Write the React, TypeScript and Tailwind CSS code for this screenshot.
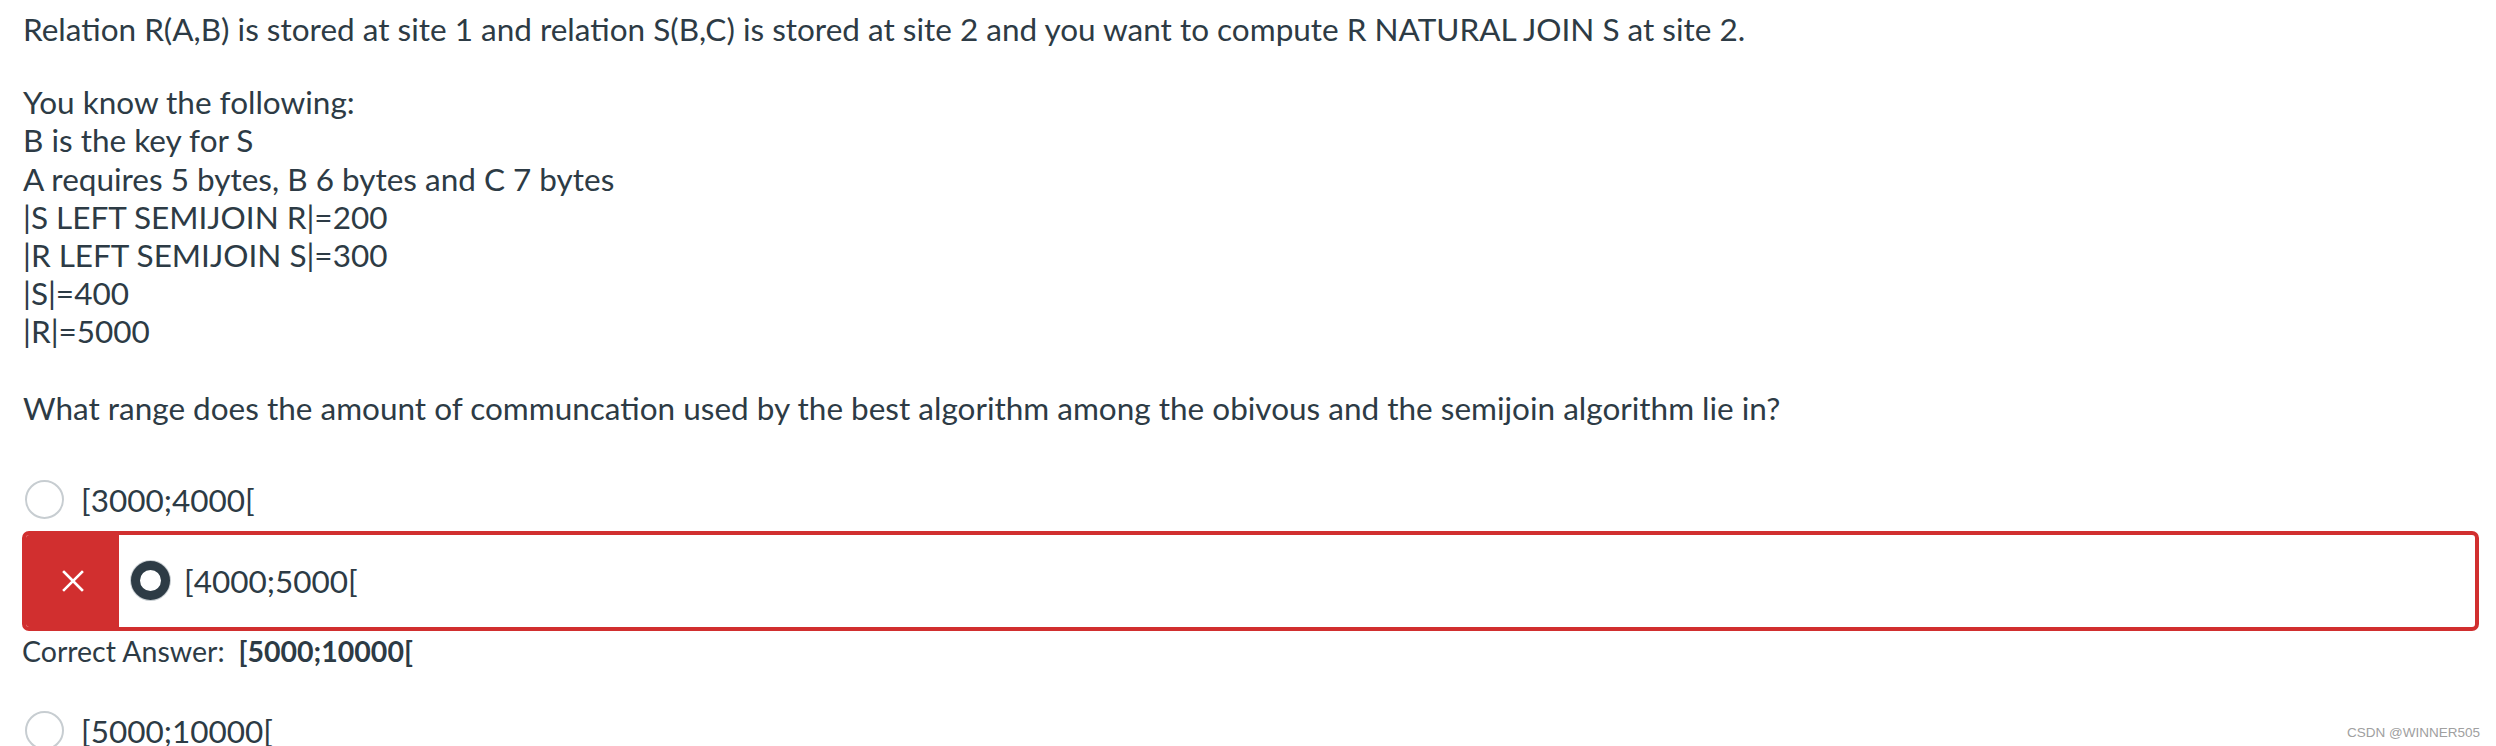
export default function App() {
  const textCls = "text-[#2d3b45]";
  return (
    <div
      className={`relative w-[2496px] h-[746px] overflow-hidden bg-white ${textCls}`}
      style={{ fontFamily: "Lato, 'Open Sans', sans-serif" }}
    >
      <div className="pl-[23px] pt-[10px] text-[31.5px] leading-[38.2px]">
        <p>
          Relation R(A,B) is stored at site 1 and relation S(B,C) is stored at site 2 and you want to compute R NATURAL JOIN S at site 2.
        </p>
        <div className="mt-[35px]">
          <p>You know the following:</p>
          <p>B is the key for S</p>
          <p>A requires 5 bytes, B 6 bytes and C 7 bytes</p>
          <p>|S LEFT SEMIJOIN R|=200</p>
          <p>|R LEFT SEMIJOIN S|=300</p>
          <p>|S|=400</p>
          <p>|R|=5000</p>
        </div>
        <p className="mt-[38px]">
          What range does the amount of communcation used by the best algorithm among the obivous and the semijoin algorithm lie in?
        </p>
      </div>

      <div className="pl-[22px] pr-[17px] text-[31.5px] leading-[38.2px]">
        {/* option 1 */}
        <div className="mt-[49px] flex items-center h-[48px]">
          <div className="w-[39px] h-[39px] rounded-full border-2 border-[#c7cdd1] bg-white shrink-0 ml-[3px]" />
          <span className="ml-[17px]">[3000;4000[</span>
        </div>

        {/* option 2 (wrong) */}
        <div className="mt-[7px] flex h-[100px] rounded-[7px] border-[4px] border-[#d12f2f] overflow-hidden">
          <div className="w-[93px] bg-[#d12f2f] flex items-center justify-center shrink-0">
            <svg width="22" height="22" viewBox="0 0 22 22" fill="none">
              <path d="M2 2 L20 20 M20 2 L2 20" stroke="white" strokeWidth="2.6" strokeLinecap="square" />
            </svg>
          </div>
          <div className="flex items-center">
            <div className="ml-[12px] w-[39px] h-[39px] rounded-full border-[9px] border-[#2d3b45] bg-white shrink-0 shadow-[0_0_0_1px_#c7cdd1]" />
            <span className="ml-[14px]">[4000;5000[</span>
          </div>
        </div>

        {/* correct answer */}
        <div className="mt-[3px] flex items-center h-[34px] text-[28.5px]">
          <span>Correct Answer:</span>
          <span className="ml-[14px] font-bold">[5000;10000[</span>
        </div>

        {/* option 3 */}
        <div className="mt-[39px] flex items-center h-[48px]">
          <div className="w-[39px] h-[39px] rounded-full border-2 border-[#c7cdd1] bg-white shrink-0 ml-[3px]" />
          <span className="ml-[17px]">[5000;10000[</span>
        </div>
      </div>

      <div
        className="absolute right-[16px] bottom-[3px] text-[13.5px] text-[#a0a0a0]"
        style={{ fontFamily: "'Liberation Sans', Arial, sans-serif" }}
      >
        CSDN @WINNER505
      </div>
    </div>
  );
}
